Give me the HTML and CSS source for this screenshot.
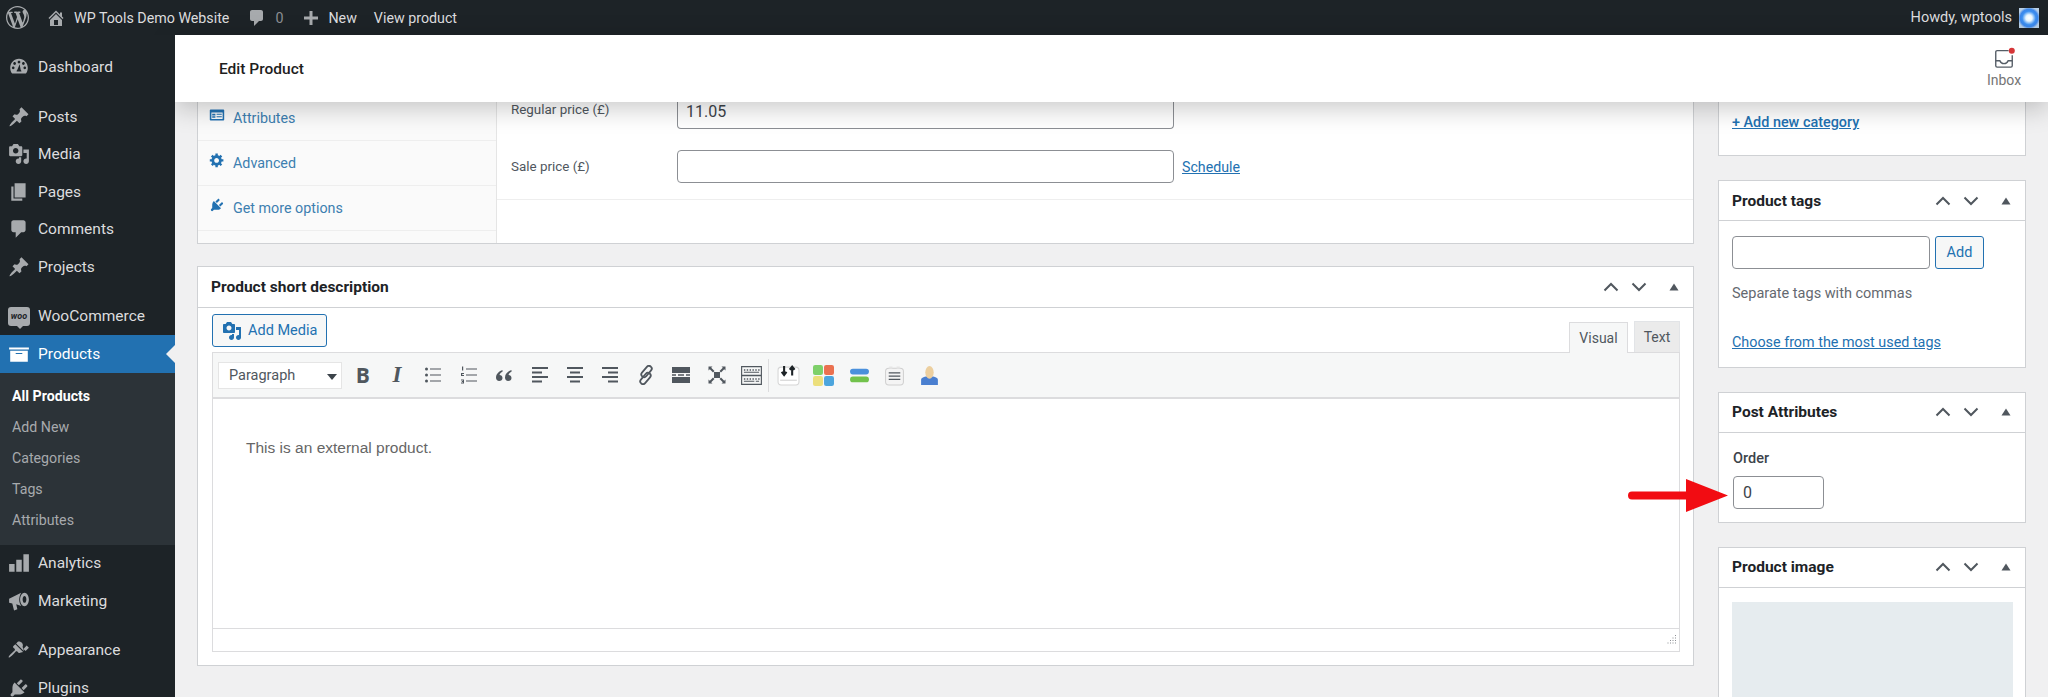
FILE: index.html
```html
<!DOCTYPE html>
<html lang="en">
<head>
<meta charset="utf-8">
<title>Edit Product</title>
<link rel="stylesheet" href="styles.css">
</head>
<body>
<svg class="defs" width="0" height="0" aria-hidden="true">
  <symbol id="i-wp" viewBox="0 0 20 20"><path d="M20 10c0-5.510-4.490-10-10-10C4.480 0 0 4.490 0 10c0 5.520 4.480 10 10 10 5.510 0 10-4.480 10-10zM7.780 15.370L4.370 6.220c.55-.02 1.170-.08 1.170-.08.5-.06.44-1.130-.06-1.110 0 0-1.450.11-2.370.11-.18 0-.37 0-.58-.01C4.120 2.690 6.870 1.070 10 1.070c2.330 0 4.450.87 6.050 2.340-.68-.11-1.650.39-1.650 1.580 0 .74.45 1.360.9 2.100.35.61.55 1.360.55 2.460 0 1.490-1.400 5-1.400 5l-3.030-8.370c.54-.02.82-.17.82-.17.5-.05.44-1.250-.06-1.220 0 0-1.440.12-2.380.12-.87 0-2.330-.12-2.330-.12-.5-.03-.56 1.200-.06 1.220l.92.08 1.260 3.410zM17.410 10c.24-.64.74-1.870.43-4.250.7 1.290 1.050 2.710 1.050 4.250 0 3.290-1.730 6.240-4.400 7.780.97-2.590 1.940-5.200 2.920-7.780zM6.100 18.090C3.120 16.650 1.110 13.530 1.110 10c0-1.300.23-2.480.72-3.590C3.250 10.300 4.670 14.200 6.100 18.090zm4.030-6.630l2.580 6.980c-.86.29-1.760.45-2.710.45-.79 0-1.570-.11-2.290-.33.81-2.370 1.620-4.730 2.420-7.100z"/></symbol>
  <symbol id="i-home" viewBox="0 0 20 20"><path d="M16 8.500l1.530 1.530-1.060 1.060L10 4.620l-6.470 6.470-1.060-1.060L10 2.500l4 4v-2h2v4zm-6-2.460l6 5.990V18H4v-5.970zM12 17v-5H8v5h4z"/></symbol>
  <symbol id="i-comment" viewBox="0 0 20 20"><path d="M5 2h9c1.100 0 2 .9 2 2v7c0 1.100-.9 2-2 2h-2l-5 5v-5H5c-1.100 0-2-.9-2-2V4c0-1.100.9-2 2-2z"/></symbol>
  <symbol id="i-plus" viewBox="0 0 20 20"><path d="M8.500 3h3v5.500H17v3h-5.500V17h-3v-5.500H3v-3h5.500z"/></symbol>
  <symbol id="i-dash" viewBox="0 0 20 20"><path fill-rule="evenodd" d="M3.760 16h12.480c1.100-1.430 1.760-3.210 1.760-5.140 0-4.620-3.580-8.360-8-8.360s-8 3.740-8 8.360c0 1.930.66 3.710 1.760 5.140zM10 4.260c.69 0 1.250.58 1.250 1.300s-.56 1.310-1.250 1.310-1.250-.59-1.250-1.310.56-1.300 1.250-1.300zM6 5.550c.69 0 1.250.59 1.250 1.310S6.690 8.170 6 8.170s-1.250-.59-1.250-1.310S5.310 5.550 6 5.550zm8 0c.69 0 1.250.59 1.250 1.310s-.56 1.310-1.250 1.310-1.250-.59-1.250-1.310.56-1.310 1.250-1.310zM4.750 9.460c.69 0 1.250.59 1.250 1.310s-.56 1.310-1.250 1.310-1.250-.59-1.250-1.310.56-1.310 1.250-1.310zm10.500 0c.69 0 1.250.59 1.250 1.310s-.56 1.310-1.250 1.310-1.250-.59-1.250-1.310.56-1.310 1.250-1.310zM10.600 7.500l.9 4.900c.43.39.71.95.71 1.600H7.800c0-.65.28-1.210.71-1.600z"/></symbol>
  <symbol id="i-pin" viewBox="0 0 20 20"><path d="M10.440 3.020l1.820-1.820 6.360 6.350-1.830 1.820c-1.050-.68-2.480-.57-3.410.36l-.75.75c-.92.93-1.040 2.350-.35 3.410l-1.830 1.820-2.410-2.410-2.800 2.790c-.42.42-3.380 2.710-3.800 2.290s1.860-3.390 2.280-3.810l2.790-2.790L4.100 9.360l1.830-1.820c1.050.69 2.480.57 3.400-.36l.75-.75c.93-.92 1.050-2.350.36-3.410z"/></symbol>
  <symbol id="i-media" viewBox="0 0 20 20"><path fill-rule="evenodd" d="M13 11V4c0-.55-.45-1-1-1h-1.670L9 1H5L3.670 3H2c-.55 0-1 .45-1 1v7c0 .55.45 1 1 1h10c.55 0 1-.45 1-1zM7 4.500c1.380 0 2.500 1.120 2.500 2.500S8.380 9.500 7 9.500 4.500 8.380 4.500 7 5.620 4.500 7 4.500zM14 6h5v10.500c0 1.380-1.120 2.500-2.500 2.500S14 17.880 14 16.500s1.120-2.500 2.500-2.500c.17 0 .34.020.5.050V9h-3V6zm-4 8.050V13h2v3.500c0 1.380-1.120 2.500-2.500 2.500S7 17.880 7 16.500 8.120 14 9.500 14c.17 0 .34.020.5.050z"/></symbol>
  <symbol id="i-page" viewBox="0 0 20 20"><path d="M6 15V2h10v13H6zm-1 1h8v2H3V5h2v11z"/></symbol>
  <symbol id="i-archive" viewBox="0 0 20 20"><path fill-rule="evenodd" d="M19 4v2H1V4h18zM2 7h16v10H2V7zm11 3V9H7v1h6z"/></symbol>
  <symbol id="i-bars" viewBox="0 0 20 20"><path d="M1 11h5v7H1zM7.500 7h5v11h-5zM14 2h5v16h-5z"/></symbol>
  <symbol id="i-mega" viewBox="0 0 20 20"><path fill-rule="evenodd" d="M1 8l11-5.500c-1.200 2-1.800 4.200-1.800 6.200s.6 4 1.800 5.800L7.500 13l1 4.500-3 1.200-1.600-6.400L1 11.500zM15 2.500c2.200 0 4 2.800 4 6.100s-1.800 6.100-4 6.100-4-2.800-4-6.100 1.800-6.100 4-6.100zm0 3c-.9 0-1.700 1.400-1.700 3.100s.8 3.100 1.700 3.100 1.700-1.400 1.700-3.100S15.900 5.500 15 5.500z"/></symbol>
  <symbol id="i-brush" viewBox="0 0 20 20"><path d="M14.480 11.060L7.410 3.990l1.500-1.500c.5-.56 2.300-.47 3.540.77 1.210 1.220 1.310 3.040.77 3.540zm-.71.710L6.700 4.700 4.930 6.470c-.39.390-.39 1.020 0 1.410l1.060 1.060c.39.390.39 1.030 0 1.420-.6.600-6.360 5.300-5.300 6.360s5.760-4.700 6.360-5.300c.39-.39 1.030-.39 1.420 0l1.060 1.060c.39.390 1.020.39 1.410 0zM17 6l2 2-3 3-2-2z"/></symbol>
  <symbol id="i-plug" viewBox="0 0 20 20"><path d="M13.110 4.360L9.870 7.600 8 5.730l3.240-3.240c.35-.34 1.050-.2 1.560.32.52.51.66 1.210.31 1.550zm-8 1.770l.91-1.120 9.010 9.010-1.190.84c-.71.710-2.630 1.160-3.820 1.160H6.140L4.900 17.260c-.59.590-1.540.59-2.120 0-.59-.58-.59-1.530 0-2.120l1.240-1.240v-3.880c0-1.130.4-3.190 1.090-3.890zm7.260 3.970l3.240-3.240c.34-.35 1.040-.21 1.550.31.52.51.66 1.210.31 1.550l-3.240 3.250z"/></symbol>
  <symbol id="i-card" viewBox="0 0 20 20"><path fill-rule="evenodd" d="M2 3h16c.6 0 1 .4 1 1v12c0 .6-.4 1-1 1H2c-.6 0-1-.4-1-1V4c0-.6.4-1 1-1zm1 4v8h14V7zm1 1.500h4v2H4zm0 3h4v2H4zm5.500-3H16v1.300H9.500zm0 3H16v1.300H9.500z"/></symbol>
  <symbol id="i-gear" viewBox="0 0 20 20"><path fill-rule="evenodd" d="M18 12h-2.180c-.17.7-.44 1.350-.81 1.930l1.540 1.540-2.100 2.100-1.540-1.540c-.58.36-1.230.64-1.910.81V19H8v-2.180c-.68-.17-1.330-.45-1.910-.81l-1.540 1.540-2.120-2.120 1.540-1.540c-.36-.58-.64-1.230-.81-1.890H1V9h2.180c.17-.7.44-1.350.8-1.940L2.430 5.510l2.100-2.100 1.540 1.540c.58-.37 1.240-.64 1.930-.81V2h3v2.180c.68.17 1.330.44 1.910.8l1.540-1.540 2.120 2.120-1.540 1.540c.36.590.64 1.240.81 1.900H18V12zm-8.500 1.500c1.660 0 3-1.340 3-3s-1.340-3-3-3-3 1.340-3 3 1.340 3 3 3z"/></symbol>
  <symbol id="i-up" viewBox="0 0 16 10"><path d="M1.500 8.500L8 2l6.500 6.500" fill="none" stroke="currentColor" stroke-width="2"/></symbol>
  <symbol id="i-down" viewBox="0 0 16 10"><path d="M1.500 1.500L8 8l6.500-6.500" fill="none" stroke="currentColor" stroke-width="2"/></symbol>
  <symbol id="i-tri" viewBox="0 0 10 8"><path d="M5 .5l4.500 7H.5z"/></symbol>
</svg>

<header class="adminbar">
  <div class="bar-group">
    <svg class="bar-wp"><use href="#i-wp"/></svg>
    <span class="bar-item bar-site"><svg class="bar-icon"><use href="#i-home"/></svg>WP Tools Demo Website</span>
    <span class="bar-item bar-comments"><svg class="bar-icon"><use href="#i-comment"/></svg><span class="bar-count">0</span></span>
    <span class="bar-item bar-new"><svg class="bar-icon"><use href="#i-plus"/></svg>New</span>
    <span class="bar-item bar-view">View product</span>
  </div>
  <div class="bar-account">Howdy, wptools<span class="avatar"></span></div>
</header>

<div class="shell">
  <nav class="sidebar">
    <a class="menu-item"><svg class="menu-icon"><use href="#i-dash"/></svg>Dashboard</a>
    <div class="menu-sep"></div>
    <a class="menu-item"><svg class="menu-icon"><use href="#i-pin"/></svg>Posts</a>
    <a class="menu-item"><svg class="menu-icon"><use href="#i-media"/></svg>Media</a>
    <a class="menu-item"><svg class="menu-icon"><use href="#i-page"/></svg>Pages</a>
    <a class="menu-item"><svg class="menu-icon"><use href="#i-comment"/></svg>Comments</a>
    <a class="menu-item"><svg class="menu-icon"><use href="#i-pin"/></svg>Projects</a>
    <div class="menu-sep"></div>
    <a class="menu-item"><span class="woo-icon">woo</span>WooCommerce</a>
    <a class="menu-item menu-active"><svg class="menu-icon"><use href="#i-archive"/></svg>Products</a>
    <div class="submenu">
      <a class="sub-item sub-current">All Products</a>
      <a class="sub-item">Add New</a>
      <a class="sub-item">Categories</a>
      <a class="sub-item">Tags</a>
      <a class="sub-item">Attributes</a>
    </div>
    <a class="menu-item"><svg class="menu-icon"><use href="#i-bars"/></svg>Analytics</a>
    <a class="menu-item"><svg class="menu-icon"><use href="#i-mega"/></svg>Marketing</a>
    <div class="menu-sep"></div>
    <a class="menu-item"><svg class="menu-icon"><use href="#i-brush"/></svg>Appearance</a>
    <a class="menu-item"><svg class="menu-icon"><use href="#i-plug"/></svg>Plugins</a>
  </nav>

  <div class="main">
    <div class="pagehead">
      <h1 class="pagetitle">Edit Product</h1>
      <div class="inbox">
        <svg class="inbox-icon" viewBox="0 0 24 24"><path d="M17 4H4.500C3.700 4 3 4.700 3 5.500v15C3 21.300 3.700 22 4.500 22h15c.8 0 1.500-.7 1.500-1.500V9" fill="none" stroke="#555d66" stroke-width="1.500"/><path d="M3 15h4.500c.8 2.200 2.400 3.200 4.500 3.200s3.700-1 4.500-3.200H21" fill="none" stroke="#555d66" stroke-width="1.500"/><circle cx="20.500" cy="4" r="3.300" fill="#d63638"/></svg>
        <span>Inbox</span>
      </div>
    </div>

    <div class="content">
      <div class="col-left">
        <section class="panel data-panel">
          <ul class="data-tabs">
            <li class="data-tab tab-first"><svg class="tab-icon"><use href="#i-card"/></svg>Attributes</li>
            <li class="data-tab"><svg class="tab-icon"><use href="#i-gear"/></svg>Advanced</li>
            <li class="data-tab"><svg class="tab-icon"><use href="#i-plug"/></svg>Get more options</li>
          </ul>
          <div class="data-main">
            <div class="field field-first">
              <label class="field-label">Regular price (£)</label>
              <div class="field-input">11.05</div>
            </div>
            <div class="field">
              <label class="field-label">Sale price (£)</label>
              <div class="field-input"></div>
              <a class="schedule">Schedule</a>
            </div>
          </div>
        </section>

        <section class="panel desc-panel">
          <div class="panel-head">
            <h2 class="panel-title">Product short description</h2>
            <div class="handles">
              <svg class="h-chev"><use href="#i-up"/></svg>
              <svg class="h-chev"><use href="#i-down"/></svg>
              <svg class="h-tri"><use href="#i-tri"/></svg>
            </div>
          </div>
          <div class="desc-body">
            <div class="editor-top">
              <button class="add-media"><svg class="add-media-icon"><use href="#i-media"/></svg>Add Media</button>
              <div class="editor-tabs">
                <span class="etab etab-on">Visual</span>
                <span class="etab etab-text">Text</span>
              </div>
            </div>
            <div class="editor">
              <div class="toolbar">
                <div class="format-select">Paragraph<span class="caret"></span></div>
                <div class="tools">
                  <span class="tool tool-b">B</span>
                  <span class="tool tool-i">I</span>
                  <span class="tool"><svg class="tool-svg" viewBox="0 0 20 20"><circle cx="3.500" cy="4" r="1.500"/><circle cx="3.500" cy="10" r="1.500"/><circle cx="3.500" cy="16" r="1.500"/><path d="M7 3.500h11v1H7zM7 9.500h11v1H7zM7 15.500h11v1H7z"/></svg></span>
                  <span class="tool"><svg class="tool-svg" viewBox="0 0 20 20"><path d="M3 1.500h1.200v4H3zM2 8h3v1H3.200v1H5v1H2zM2 14.500h3v4H2v-1h2v-.5H2.800v-1H4v-.5H2zM7 3.500h11v1H7zM7 9.500h11v1H7zM7 15.500h11v1H7z"/></svg></span>
                  <span class="tool"><svg class="tool-svg" viewBox="0 0 20 20"><path d="M8.500 5C5.500 6 2 8.500 2 12.500c0 2 1.300 3.500 3.200 3.500S8.500 14.700 8.500 13c0-1.800-1.300-3-3-3 .3-1.500 1.700-2.700 3-3.300zM17.500 5c-3 1-6.500 3.500-6.500 7.500 0 2 1.300 3.500 3.200 3.500s3.300-1.300 3.300-3c0-1.800-1.300-3-3-3 .3-1.500 1.700-2.700 3-3.300z"/></svg></span>
                  <span class="tool"><svg class="tool-svg" viewBox="0 0 20 20"><path d="M2 2h16v2H2zM2 6.500h10v2H2zM2 11h16v2H2zM2 15.500h10v2H2z"/></svg></span>
                  <span class="tool"><svg class="tool-svg" viewBox="0 0 20 20"><path d="M2 2h16v2H2zM5 6.500h10v2H5zM2 11h16v2H2zM5 15.500h10v2H5z"/></svg></span>
                  <span class="tool"><svg class="tool-svg" viewBox="0 0 20 20"><path d="M2 2h16v2H2zM8 6.500h10v2H8zM2 11h16v2H2zM8 15.500h10v2H8z"/></svg></span>
                  <span class="tool"><svg class="tool-svg" viewBox="0 0 20 20"><g fill="none" stroke="#50575e" stroke-width="1.800"><rect x="7.800" y="0" width="5.500" height="13" rx="2.700" transform="rotate(40 10.500 6.500)"/><rect x="6.700" y="7" width="5.500" height="13" rx="2.700" transform="rotate(40 9.500 13.500)"/></g></svg></span>
                  <span class="tool"><svg class="tool-svg" viewBox="0 0 20 20"><path d="M1 2h18v6H1zM1 12h18v6H1zM1 9.300h4v1.400H1zM7 9.300h6v1.400H7zM15 9.300h4v1.400h-4z"/></svg></span>
                  <span class="tool"><svg class="tool-svg" viewBox="0 0 20 20"><path d="M7 7h6v6H7zM1.500 1.500h4L4.200 2.800 7.500 6 6 7.500 2.800 4.200 1.500 5.500zM18.500 1.500v4l-1.300-1.300L14 7.500 12.500 6l3.300-3.200-1.300-1.300zM1.500 18.500v-4l1.300 1.300L6 12.500 7.500 14l-3.300 3.200 1.300 1.300zM18.500 18.500h-4l1.300-1.300L12.500 14l1.500-1.500 3.200 3.300 1.300-1.300z"/></svg></span>
                  <span class="tool"><svg class="tool-svg tool-kb" viewBox="0 0 22 20"><path fill-rule="evenodd" d="M0 0h22v20H0zM1.200 1.200v8h19.600v-8zm0 9.600v8h19.600v-8z"/><path d="M3 3.500h1.500v1.500H3zM6 3.500h1.500v1.500H6zM9 3.500h1.500v1.500H9zM12 3.500h1.500v1.500H12zM15 3.500h1.500v1.500H15zM18 3.500h1.500v1.500H18zM3 6h16v1.200H3zM3 13h1.500v1.500H3zM6 13h1.500v1.500H6zM9 13h1.500v1.500H9zM12 13h1.500v1.500H12zM15 13h1.500v1.500H15zM18 13h1.500v1.500H18zM3 15.500h11v1.200H3zM15.500 15.500H19v1.200h-3.500z"/></svg></span>
                </div>
                <div class="tools tools-custom">
                  <span class="tool"><svg class="tool-c tool-c-wide" viewBox="0 0 22 22"><rect x="1" y="3" width="20" height="17" rx="3" fill="#fff" stroke="#d5d5d5"/><path d="M3 15h16v1H3z" fill="#cfcfcf"/><path d="M6.800 2v8M4.500 7.500l2.300 3 2.300-3M14.500 11V3M12.200 5.500l2.300-3 2.300 3" fill="none" stroke="#1d2327" stroke-width="2"/></svg></span>
                  <span class="tool"><svg class="tool-c" viewBox="0 0 20 20"><rect x="0" y="0" width="9.500" height="9.500" rx="2" fill="#7ed06a"/><rect x="10.500" y="0" width="9.500" height="9.500" rx="2" fill="#ea7150"/><rect x="0" y="10.500" width="9.500" height="9.500" rx="2" fill="#ecdf7c"/><rect x="10.500" y="10.500" width="9.500" height="9.500" rx="2" fill="#4ca5dd"/></svg></span>
                  <span class="tool"><svg class="tool-c" viewBox="0 0 20 20"><rect x="1" y="3.500" width="18" height="5.500" rx="2.700" fill="#4a90dc"/><rect x="1" y="11" width="18" height="5.500" rx="2.700" fill="#72c24c"/></svg></span>
                  <span class="tool"><svg class="tool-c" viewBox="0 0 20 20"><rect x="1.500" y="3" width="17" height="16" rx="3" fill="#f4f4f4" stroke="#d0d0d0"/><path d="M5 1.500h3v2H5zM12 1.500h3v2h-3z" fill="#e5e5e5"/><path d="M4.500 7h11v1.200h-11zM4.500 10h11v1.200h-11zM4.500 13h11v1.200h-11z" fill="#50575e"/></svg></span>
                  <span class="tool"><svg class="tool-c" viewBox="0 0 20 20"><path d="M2 19v-5c0-1.500 2-2.500 4.500-3h7c2.500.5 4.500 1.500 4.500 3v5z" fill="#4a7fd0"/><ellipse cx="10" cy="7" rx="4" ry="6" fill="#eccf9f"/></svg></span>
                </div>
              </div>
              <div class="editor-area">This is an external product.</div>
              <div class="statusbar">
                <svg class="resize" viewBox="0 0 12 12"><path d="M10 1h1v1h-1zM10 3.500h1v1h-1zM7.500 3.500h1v1h-1zM10 6h1v1h-1zM7.500 6h1v1h-1zM5 6h1v1H5zM10 8.500h1v1h-1zM7.500 8.500h1v1h-1zM5 8.500h1v1H5zM2.500 8.500h1v1h-1z"/></svg>
              </div>
            </div>
          </div>
        </section>
      </div>

      <aside class="col-right">
        <section class="panel cat-panel">
          <a class="add-cat">+ Add new category</a>
        </section>

        <section class="panel">
          <div class="panel-head">
            <h2 class="panel-title">Product tags</h2>
            <div class="handles">
              <svg class="h-chev"><use href="#i-up"/></svg>
              <svg class="h-chev"><use href="#i-down"/></svg>
              <svg class="h-tri"><use href="#i-tri"/></svg>
            </div>
          </div>
          <div class="tags-body">
            <div class="tag-row">
              <div class="tag-input"></div>
              <button class="tag-add">Add</button>
            </div>
            <p class="tag-hint">Separate tags with commas</p>
            <a class="tag-link">Choose from the most used tags</a>
          </div>
        </section>

        <section class="panel">
          <div class="panel-head head-tight">
            <h2 class="panel-title">Post Attributes</h2>
            <div class="handles">
              <svg class="h-chev"><use href="#i-up"/></svg>
              <svg class="h-chev"><use href="#i-down"/></svg>
              <svg class="h-tri"><use href="#i-tri"/></svg>
            </div>
          </div>
          <div class="attr-body">
            <div class="order-label">Order</div>
            <div class="order-input">0</div>
            <svg class="red-arrow" viewBox="0 0 100 34"><path d="M4 12.500h54V0l42 16.500L58 33V20.500H4a4 4 0 0 1 0-8z" fill="#f20c12"/></svg>
          </div>
        </section>

        <section class="panel image-panel">
          <div class="panel-head head-tight">
            <h2 class="panel-title">Product image</h2>
            <div class="handles">
              <svg class="h-chev"><use href="#i-up"/></svg>
              <svg class="h-chev"><use href="#i-down"/></svg>
              <svg class="h-tri"><use href="#i-tri"/></svg>
            </div>
          </div>
          <div class="image-body"><div class="image-box"></div></div>
        </section>
      </aside>
    </div>
  </div>
</div>
</body>
</html>
```

FILE: styles.css
```css
* { box-sizing: border-box; }
html, body { margin: 0; height: 100%; }
body {
  height: 697px;
  overflow: hidden;
  display: flex;
  flex-direction: column;
  font-family: Roboto, "Liberation Sans", sans-serif;
  font-size: 15px;
  color: #3c434a;
  background: #f0f0f1;
}
.defs { position: absolute; }
h1, h2, p, ul { margin: 0; padding: 0; }
li { list-style: none; }
button { font-family: inherit; }

/* admin bar */
.adminbar {
  flex: 0 0 35px;
  height: 35px;
  background: #1d2327;
  color: #dcdcde;
  display: flex;
  align-items: center;
  justify-content: space-between;
  font-size: 14.25px;
  padding: 0 9px 0 6px;
}
.bar-group { display: flex; align-items: center; }
.bar-wp { width: 23px; height: 23px; fill: #a7aaad; }
.bar-item { display: flex; align-items: center; }
.bar-icon { width: 20px; height: 20px; fill: #a7aaad; }
.bar-site { margin-left: 17px; }
.bar-site .bar-icon { margin-right: 8px; }
.bar-comments { margin-left: 18px; }
.bar-count { margin-left: 8px; color: #8c8f94; }
.bar-new { margin-left: 18px; }
.bar-new .bar-icon { margin-right: 7px; }
.bar-view { margin-left: 17px; }
.bar-account { display: flex; align-items: center; gap: 7px; font-size: 14.5px; }
.avatar {
  width: 20px;
  height: 20px;
  background: radial-gradient(circle, #fff 0, #e8f6ff 22%, #3c8ff0 48%, #3b86ea 62%, #b8cfe6 78%);
}

/* layout */
.shell { flex: 1; display: flex; min-height: 0; }
.sidebar {
  position: relative;
  z-index: 3;
  flex: 0 0 175px;
  background: #1d2327;
  padding-top: 13.5px;
  overflow: hidden;
}
.menu-item {
  position: relative;
  height: 37.5px;
  display: flex;
  align-items: center;
  padding-left: 8px;
  color: #dcdcde;
  font-size: 15.5px;
}
.menu-icon { width: 22px; height: 22px; fill: #a7aaad; margin-right: 8px; flex: none; }
.menu-sep { height: 12px; }
.woo-icon {
  position: relative;
  flex: none;
  width: 22px;
  height: 19px;
  margin-right: 8px;
  border-radius: 3px;
  background: #a7aaad;
  color: #1d2327;
  font-size: 9px;
  font-weight: 700;
  font-style: italic;
  line-height: 19px;
  text-align: center;
}
.woo-icon::after {
  content: "";
  position: absolute;
  left: 9px;
  bottom: -3px;
  border: 3px solid transparent;
  border-top-color: #a7aaad;
  border-bottom-width: 0;
}
.menu-active { background: #2271b1; color: #fff; }
.menu-active .menu-icon { fill: #fff; }
.menu-active::after {
  content: "";
  position: absolute;
  right: 0;
  top: 50%;
  margin-top: -9px;
  border: 9px solid transparent;
  border-right-color: #f0f0f1;
  border-left-width: 0;
}
.submenu { background: #2c3338; padding: 8px 0 9px; }
.sub-item { display: block; height: 31px; line-height: 31px; padding-left: 12px; font-size: 14.2px; color: #a7aaad; }
.sub-current { color: #fff; font-weight: 700; }

.main { flex: 1; min-width: 0; display: flex; flex-direction: column; }
.pagehead {
  position: relative;
  z-index: 2;
  flex: 0 0 67px;
  background: #fff;
  box-shadow: 0 6px 26px rgba(0, 0, 0, .22);
  display: flex;
  align-items: center;
  justify-content: space-between;
  padding: 0 14px 0 44px;
}
.pagetitle { font-size: 15.5px; font-weight: 500; color: #1e1e1e; }
.inbox {
  width: 60px;
  display: flex;
  flex-direction: column;
  align-items: center;
  color: #757575;
  font-size: 14px;
  line-height: 16px;
  padding-bottom: 2px;
}
.inbox-icon { width: 22px; height: 22px; margin-bottom: 3px; }

.content {
  flex: 1;
  min-height: 0;
  overflow: hidden;
  display: flex;
  align-items: flex-start;
  gap: 24px;
  padding: 0 22px;
}
.col-left { flex: 1; min-width: 0; display: flex; flex-direction: column; gap: 22px; }
.col-right { flex: 0 0 308px; display: flex; flex-direction: column; gap: 24px; }
.panel { background: #fff; border: 1px solid #cfd1d4; flex: none; }

/* product data */
.data-panel { display: flex; height: 142px; border-top: 0; }
.data-tabs { flex: 0 0 299px; background: #fafafa; border-right: 1px solid #e5e5e5; }
.data-tab {
  height: 45px;
  display: flex;
  align-items: center;
  padding-left: 11px;
  color: #3d7fb0;
  font-size: 14.3px;
  border-bottom: 1px solid #eee;
}
.tab-first { height: 39px; padding-bottom: 6px; }
.tab-icon { width: 16px; height: 16px; fill: #2271b1; margin-right: 8px; margin-top: -6px; flex: none; }
.data-main { flex: 1; }
.field { display: flex; align-items: center; height: 56px; padding-left: 14px; border-bottom: 1px solid #eee; padding-bottom: 10px; }
.field-first { height: 42px; border-bottom: 0; align-items: flex-start; padding-bottom: 0; }
.field-label { flex: 0 0 166px; font-size: 13.4px; color: #50575e; }
.field-first .field-label { line-height: 16px; }
.field-input {
  flex: 0 0 497px;
  height: 33px;
  border: 1px solid #8c8f94;
  border-radius: 4px;
  padding: 0 8px;
  line-height: 31px;
  font-size: 16px;
  color: #3c434a;
  background: #fff;
}
.field-first .field-input { height: 27px; border-top: 0; border-radius: 0 0 4px 4px; line-height: 20px; }
.schedule { margin-left: 8px; font-size: 14.2px; color: #2271b1; text-decoration: underline; }

/* panel head */
.panel-head {
  height: 40px;
  display: flex;
  align-items: center;
  justify-content: space-between;
  padding: 0 12px 0 13px;
  border-bottom: 1px solid #cfd1d4;
}
.head-tight { padding-bottom: 2px; }
.panel-title { font-size: 15.5px; font-weight: 700; color: #1d2327; }
.handles { display: flex; align-items: center; }
.h-chev { width: 16px; height: 10px; color: #50575e; margin-right: 12px; }
.h-tri { width: 10px; height: 8px; fill: #50575e; margin-left: 10px; margin-right: 2px; }

/* description */
.desc-panel .panel-head { height: 41px; }
.desc-body { padding: 6px 13px 13px 14px; }
.editor-top { display: flex; justify-content: space-between; height: 38px; }
.add-media {
  height: 33px;
  width: 115px;
  display: flex;
  align-items: center;
  padding: 0 0 0 9px;
  background: #f6f7f7;
  border: 1px solid #2271b1;
  border-radius: 3px;
  color: #2271b1;
  font-size: 14.5px;
}
.add-media-icon { width: 20px; height: 20px; fill: #2271b1; margin-right: 6px; }
.editor-tabs { display: flex; align-items: flex-end; gap: 6px; }
.etab {
  height: 31px;
  width: 46px;
  text-align: center;
  line-height: 30px;
  font-size: 14px;
  color: #50575e;
  background: #ebebeb;
  border: 1px solid #e2e4e7;
  border-bottom: 0;
}
.etab-on { position: relative; width: 59px; background: #f6f7f7; border-color: #dcdcde; margin-bottom: -1px; }
.editor { border: 1px solid #dcdcde; }
.toolbar {
  height: 46px;
  display: flex;
  align-items: center;
  padding-left: 5px;
  background: #f6f7f7;
  border-bottom: 2px solid #dcdcde;
}
.format-select {
  position: relative;
  width: 124px;
  height: 27px;
  padding-left: 10px;
  line-height: 25px;
  font-size: 14.5px;
  color: #50575e;
  background: #fff;
  border: 1px solid #e5e5e5;
}
.caret {
  position: absolute;
  right: 4px;
  top: 11px;
  border: 5px solid transparent;
  border-top: 6px solid #3c434a;
  border-bottom-width: 0;
}
.tools { display: flex; align-items: center; height: 33px; padding-left: 3px; }
.tools-custom { padding-left: 2px; border-left: 1px solid #dcdcde; margin-left: -2px; }
.tool { width: 35.4px; height: 28px; display: flex; align-items: center; justify-content: center; color: #50575e; }
.tool-b { font-family: "Open Sans", Roboto, sans-serif; font-weight: 700; font-size: 21px; }
.tool-i { font-family: "Liberation Serif", serif; font-weight: 700; font-style: italic; font-size: 23px; padding-right: 2px; }
.tool-svg { width: 20px; height: 20px; fill: #50575e; }
.tool-kb { width: 21px; height: 19px; }
.tool-c { width: 21px; height: 21px; }
.tool-c-wide { width: 23px; height: 23px; }
.editor-area {
  height: 230px;
  padding: 37px 0 0 33px;
  background: #fff;
  font-family: "Liberation Sans", Arial, sans-serif;
  font-size: 15.5px;
  line-height: 24px;
  color: #666;
  border-bottom: 1px solid #dcdcde;
}
.statusbar { height: 22px; display: flex; justify-content: flex-end; align-items: center; padding-right: 2px; }
.resize { width: 12px; height: 12px; fill: #8c8f94; }

/* right column */
.cat-panel { height: 54px; border-top: 0; padding: 11px 13px 0; }
.add-cat { font-size: 14.4px; font-weight: 500; color: #2271b1; text-decoration: underline; }
.tags-body { padding: 15px 13px 0; height: 146px; }
.tag-row { display: flex; gap: 5px; height: 33px; }
.tag-input { width: 198px; border: 1px solid #8c8f94; border-radius: 4px; }
.tag-add {
  width: 49px;
  padding: 0;
  background: #f6f7f7;
  border: 1px solid #2271b1;
  border-radius: 3px;
  color: #2271b1;
  font-size: 14.5px;
}
.tag-hint { margin-top: 15px; font-size: 14.5px; color: #646970; line-height: 20px; }
.tag-link { display: block; margin-top: 29px; font-size: 14.35px; line-height: 20px; color: #2271b1; text-decoration: underline; }
.attr-body { position: relative; height: 89px; padding: 17px 14px 0; }
.order-label { font-size: 14.5px; font-weight: 500; color: #3c434a; line-height: 18px; }
.order-input {
  width: 91px;
  height: 33px;
  margin-top: 8px;
  border: 1px solid #8c8f94;
  border-radius: 4px;
  padding-left: 9px;
  line-height: 31px;
  font-size: 16px;
}
.red-arrow { position: absolute; left: -91px; top: 46px; width: 100px; height: 34px; }
.image-body { padding: 14px 12px 0 13px; height: 300px; }
.image-box { height: 286px; background: #e6ecef; }
```
